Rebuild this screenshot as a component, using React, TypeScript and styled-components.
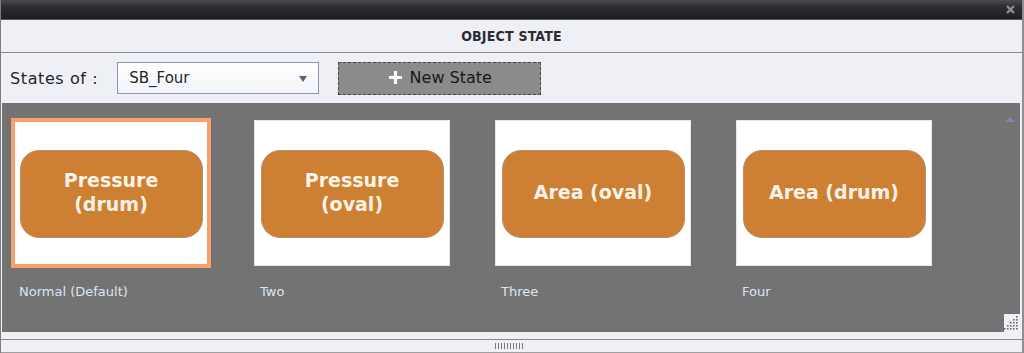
import React from "react";
import styled, { createGlobalStyle } from "styled-components";

const GlobalStyle = createGlobalStyle`
  html, body {
    margin: 0;
    padding: 0;
    background: #eff0f5;
  }
  * {
    box-sizing: border-box;
  }
`;

const Window = styled.div`
  width: 1024px;
  height: 353px;
  display: flex;
  flex-direction: column;
  background: #eff0f5;
  border-left: 1px solid #7e7e7e;
  border-right: 2px solid #8f8f8f;
  overflow: hidden;
  font-family: "DejaVu Sans", sans-serif;
`;

const TitleBar = styled.div`
  height: 20px;
  flex: none;
  display: flex;
  justify-content: flex-end;
  align-items: center;
  padding-right: 7px;
  background: linear-gradient(#4a4c51 0%, #2c2e32 35%, #1e1f22 100%);
  border-bottom: 1px solid #55575b;
`;

const Header = styled.div`
  height: 33px;
  flex: none;
  display: flex;
  align-items: center;
  justify-content: center;
  border-bottom: 1px solid #8c8c8c;
  font-family: "DejaVu Sans Condensed", "DejaVu Sans", sans-serif;
  font-stretch: condensed;
  font-weight: bold;
  font-size: 14px;
  color: #2a2c33;
  letter-spacing: 0.2px;
`;

const Toolbar = styled.div`
  height: 50px;
  flex: none;
  display: flex;
  align-items: center;
  padding-left: 9px;
`;

const Caption = styled.span`
  font-size: 16px;
  letter-spacing: 0.6px;
  color: #23252c;
  margin-right: 19px;
`;

const Select = styled.div`
  width: 202px;
  height: 32px;
  display: flex;
  align-items: center;
  justify-content: space-between;
  padding: 0 11px 1px 11px;
  border: 1px solid #8e95b2;
  background: linear-gradient(#ffffff, #f3f4f9);
  font-size: 15px;
  color: #22242a;
  margin-right: 19px;
`;

const Arrow = styled.span`
  width: 0;
  height: 0;
  border-left: 4px solid transparent;
  border-right: 4px solid transparent;
  border-top: 6px solid #5b6278;
  margin-top: 2px;
`;

const NewButton = styled.button`
  width: 203px;
  height: 33px;
  display: flex;
  align-items: center;
  justify-content: center;
  gap: 7px;
  padding: 0 0 1px 0;
  background: #8b8b8b;
  border: 1px dashed #4b4b4b;
  font-family: "DejaVu Sans", sans-serif;
  font-size: 16px;
  color: #17181b;
`;

const Canvas = styled.div`
  position: relative;
  height: 229px;
  flex: none;
  margin: 0 2px 0 1px;
  background: #737373;
  display: flex;
  gap: 45px;
  padding: 17px 0 0 11px;
`;

const Item = styled.div`
  width: 196px;
  display: flex;
  flex-direction: column;
`;

const Thumb = styled.div<{ $selected?: boolean }>`
  width: 196px;
  height: 146px;
  background: #fff;
  border: 1px solid #e4e7ee;
  display: flex;
  justify-content: center;
  padding-top: 29px;
  outline: ${(p) => (p.$selected ? "4px solid #f7a06c" : "none")};
  outline-offset: -2px;
`;

const Pill = styled.div`
  width: 183px;
  height: 88px;
  border-radius: 19px;
  background: #cd7f33;
  border: 1px solid #b7916c;
  display: flex;
  align-items: center;
  justify-content: center;
  text-align: center;
  font-family: "DejaVu Sans", sans-serif;
  font-weight: bold;
  font-size: 19px;
  line-height: 24px;
  color: #fbf3e6;
  padding-bottom: 5px;
`;

const Label = styled.div`
  margin-top: 18px;
  padding-left: 6px;
  font-size: 13px;
  color: #dbe5f4;
`;

const ScrollUp = styled.span`
  position: absolute;
  top: 14px;
  right: 5px;
  width: 0;
  height: 0;
  border-left: 5px solid transparent;
  border-right: 5px solid transparent;
  border-bottom: 5px solid #7f8aa6;
`;

const Resize = styled.div`
  position: absolute;
  right: 0;
  bottom: 0;
  width: 16px;
  height: 18px;
  background: #eff0f5;
  display: flex;
  align-items: flex-end;
  justify-content: flex-end;
  padding: 0 2px 2px 0;
`;

const Gap = styled.div`
  height: 8px;
  flex: none;
  border-bottom: 1px solid #8a8a8a;
`;

const Footer = styled.div`
  flex: 1;
  display: flex;
  justify-content: center;
  align-items: center;
  border-bottom: 1px solid #a0a0a0;
  padding-right: 4px;
`;

const GripLines = styled.div`
  width: 30px;
  height: 6px;
  background: repeating-linear-gradient(
    90deg,
    #7a7a7a 0px,
    #7a7a7a 1px,
    transparent 1px,
    transparent 3px
  );
`;

const states = [
  { name: "Normal (Default)", text: ["Pressure", "(drum)"], selected: true },
  { name: "Two", text: ["Pressure", "(oval)"] },
  { name: "Three", text: ["Area (oval)"] },
  { name: "Four", text: ["Area (drum)"] },
];

function CloseIcon() {
  return (
    <svg width="9" height="9" viewBox="0 0 9 9">
      <path d="M1 1 L8 8 M8 1 L1 8" stroke="#8b8e93" strokeWidth="2.4" />
    </svg>
  );
}

function PlusIcon() {
  return (
    <svg width="15" height="15" viewBox="0 0 15 15">
      <path d="M7.5 1 V14 M1 7.5 H14" stroke="#ffffff" strokeWidth="3.2" />
    </svg>
  );
}

function Dots() {
  const dots: React.ReactElement[] = [];
  for (let r = 0; r < 5; r++) {
    for (let c = 0; c < 5; c++) {
      if (c + r >= 4) {
        dots.push(<rect key={`${r}-${c}`} x={c * 3} y={r * 3} width="1.6" height="1.6" fill="#6a6a6a" />);
      }
    }
  }
  return (
    <svg width="14" height="14" viewBox="0 0 14 14">
      {dots}
    </svg>
  );
}

export default function App(): React.ReactElement {
  return (
    <>
      <GlobalStyle />
      <Window>
        <TitleBar>
          <CloseIcon />
        </TitleBar>
        <Header>OBJECT STATE</Header>
        <Toolbar>
          <Caption>States of :</Caption>
          <Select>
            <span>SB_Four</span>
            <Arrow />
          </Select>
          <NewButton>
            <PlusIcon />
            New State
          </NewButton>
        </Toolbar>
        <Canvas>
          {states.map((s) => (
            <Item key={s.name}>
              <Thumb $selected={s.selected}>
                <Pill>
                  <div>
                    {s.text.map((t) => (
                      <div key={t}>{t}</div>
                    ))}
                  </div>
                </Pill>
              </Thumb>
              <Label>{s.name}</Label>
            </Item>
          ))}
          <ScrollUp />
          <Resize>
            <Dots />
          </Resize>
        </Canvas>
        <Gap />
        <Footer>
          <GripLines />
        </Footer>
      </Window>
    </>
  );
}
